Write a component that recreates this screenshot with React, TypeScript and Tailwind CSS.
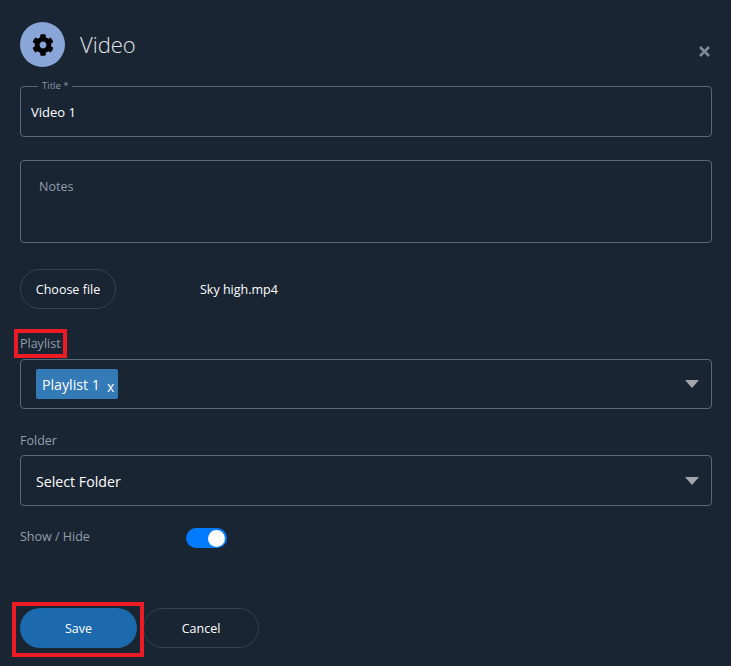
import { FaCog } from 'react-icons/fa'

const labelClass = 'text-[12.5px] leading-[18px] text-[#929eab]'

function SelectBox({ children, height }: { children: React.ReactNode; height: string }) {
  return (
    <div className={`flex items-center justify-between rounded-[4px] border border-[#566a7f] pl-[15px] pr-[12px] ${height}`}>
      <div className="flex items-center">{children}</div>
      <div className="h-0 w-0 border-x-[7px] border-t-[8px] border-x-transparent border-t-[#a3a7ab]" />
    </div>
  )
}

export default function App() {
  return (
    <div className="h-[666px] w-[731px] overflow-hidden bg-[#1a2533] pl-5 pr-[19px] pt-[22px] font-['Open_Sans','Noto_Sans',sans-serif] text-white">
      {/* Header */}
      <div className="relative flex h-[45px] items-center">
        <div className="flex h-[45px] w-[45px] items-center justify-center rounded-full bg-[#8aa6d9]">
          <FaCog size={22} className="text-black" />
        </div>
        <h1 className="ml-[15px] -mt-[2px] text-[22px] font-light leading-none text-[#e2e4e6]">Video</h1>
        <span className="absolute right-[2px] top-[24px] text-[#7f8a96]">
          <svg width="11" height="11" viewBox="0 0 11 11" stroke="currentColor" strokeWidth="2.6">
            <path d="M1 1l9 9M10 1l-9 9" />
          </svg>
        </span>
      </div>

      {/* Title */}
      <div className="relative mt-[19px] flex h-[51px] items-center rounded-[4px] border border-[#566a7f] pl-[10px]">
        <span className="absolute -top-[7px] left-[17px] bg-[#1a2533] px-[4px] text-[9.5px] leading-[12px] text-[#8a97a5]">
          Title *
        </span>
        <span className="mt-[2px] text-[13px] font-medium text-white">Video 1</span>
      </div>

      {/* Notes */}
      <div className="mt-[23px] h-[83px] rounded-[4px] border border-[#566a7f] pl-[18px] pt-[17px] text-[12.5px] leading-[18px] text-[#929eab]">
        Notes
      </div>

      {/* File */}
      <div className="mt-[26px] flex items-center">
        <button className="h-10 w-24 rounded-full border border-[#34414f] pt-[2px] text-[12.5px] font-medium text-white">
          Choose file
        </button>
        <span className="ml-[84px] mt-[2px] text-[12.5px] font-medium text-white">Sky high.mp4</span>
      </div>

      {/* Playlist */}
      <div className={`mt-[26px] ${labelClass}`}>Playlist</div>
      <div className="mt-[6px]">
        <SelectBox height="h-[50px]">
          <span className="flex h-[30px] w-[82px] items-center rounded-[2px] bg-[#337ab7] pl-[6px] pt-[1px] text-[14.2px] text-white">
            Playlist 1<span className="ml-[7px] mt-[3px] text-[14px]">x</span>
          </span>
        </SelectBox>
      </div>

      {/* Folder */}
      <div className={`mt-[23px] ${labelClass}`}>Folder</div>
      <div className="mt-[5px]">
        <SelectBox height="h-[51px]">
          <span className="mt-[2px] text-[14.2px] font-medium text-white">Select Folder</span>
        </SelectBox>
      </div>

      {/* Show / Hide */}
      <div className="mt-[22px] flex items-start">
        <span className={`w-[166px] ${labelClass}`}>Show / Hide</span>
        <div className="flex h-5 w-[41px] items-center justify-end rounded-full bg-[#007bff] pr-[2px]">
          <div className="h-[17px] w-[17px] rounded-full bg-white" />
        </div>
      </div>

      {/* Actions */}
      <div className="mt-[60px] flex gap-[6px]">
        <button className="h-10 w-[117px] rounded-full bg-[#1c69ad] pt-[2px] text-[12.5px] font-medium text-white">Save</button>
        <button className="h-10 w-[116px] rounded-full border border-[#34414f] pt-[2px] text-[12.5px] font-medium text-white">
          Cancel
        </button>
      </div>

      {/* Red annotation boxes */}
      <div className="absolute left-[14px] top-[329px] h-[29px] w-[53px] border-[4px] border-[#ed1c24]" />
      <div className="absolute left-[12px] top-[602px] h-[55px] w-[132px] border-[4px] border-[#ed1c24]" />
    </div>
  )
}
